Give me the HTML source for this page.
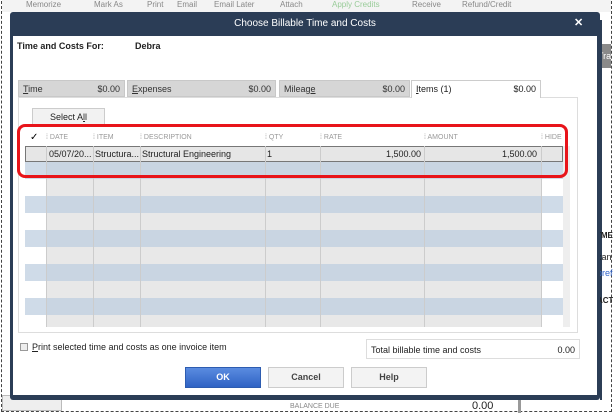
<!DOCTYPE html>
<html><head><style>
*{box-sizing:border-box;margin:0;padding:0}
body{width:613px;height:413px;overflow:hidden;background:#fff;font-family:"Liberation Sans",sans-serif;font-size:9px;color:#222;position:relative}
.a{position:absolute}
.frame{left:1px;top:1px;width:611px;height:411px;border:1px dashed #444}
</style></head><body>
<div class="a frame"></div>
<div class="a" style="left:2px;top:0;width:609px;height:12px;background:#f3f3f3;color:#888;font-size:8px;white-space:nowrap">
<span class="a" style="left:24px;top:0">Memorize</span><span class="a" style="left:92px;top:0">Mark As</span><span class="a" style="left:145px;top:0">Print</span><span class="a" style="left:175px;top:0">Email</span><span class="a" style="left:212px;top:0">Email Later</span><span class="a" style="left:278px;top:0">Attach</span><span class="a" style="left:330px;top:0;color:#9c9">Apply Credits</span><span class="a" style="left:410px;top:0">Receive</span><span class="a" style="left:460px;top:0">Refund/Credit</span></div>
<div class="a" style="left:598px;top:44px;width:13px;height:24px;background:#8a8a8a;color:#fff;font-size:9px;padding-top:7px">Tra</div>
<div class="a" style="left:600px;top:20px;width:2px;height:380px;background:#2c3e55"></div>
<div class="a" style="left:596px;top:231px;font-size:8px;font-weight:bold">TMEN</div>
<div class="a" style="left:597px;top:252px;font-size:9px">can</div>
<div class="a" style="left:597px;top:268px;font-size:9px;color:#36c">prefe</div>
<div class="a" style="left:597px;top:296px;font-size:8px;font-weight:bold">ACTI</div>
<div class="a" style="left:2px;top:395px;width:60px;height:16px;border:1px solid #bbb;background:#eee"></div>
<div class="a" style="left:290px;top:403px;font-size:7px;color:#888">BALANCE DUE</div>
<div class="a" style="left:472px;top:400px;font-size:11px">0.00</div>
<div class="a" style="left:518px;top:395px;width:3px;height:18px;background:#999"></div>
<div class="a" style="left:10px;top:12px;width:590px;height:388px;background:#2b3d56;border-radius:3px"></div>
<div class="a" style="left:10px;top:15px;width:590px;height:20px;color:#fff;font-size:10px;text-align:center;line-height:18px">Choose Billable Time and Costs</div>
<div class="a" style="left:574px;top:16px;color:#fff;font-size:11px;font-weight:bold">✕</div>
<div class="a" style="left:13px;top:36px;width:584px;height:359px;background:#fff"></div>
<div class="a" style="left:17px;top:41px;font-size:9px;font-weight:bold">Time and Costs For:</div>
<div class="a" style="left:135px;top:41px;font-size:9px;font-weight:bold">Debra</div>
<div class="a" style="left:18px;top:80px;width:107px;height:17px;background:#d6d6d6;border:1px solid #c8c8c8;padding:3px 4px;font-size:9px;color:#333"><u>T</u>ime<span style="float:right">$0.00</span></div>
<div class="a" style="left:127px;top:80px;width:149px;height:17px;background:#d6d6d6;border:1px solid #c8c8c8;padding:3px 4px;font-size:9px;color:#333"><u>E</u>xpenses<span style="float:right">$0.00</span></div>
<div class="a" style="left:279px;top:80px;width:131px;height:17px;background:#d6d6d6;border:1px solid #c8c8c8;padding:3px 4px;font-size:9px;color:#333">Mileag<u>e</u><span style="float:right">$0.00</span></div>
<div class="a" style="left:411px;top:80px;width:130px;height:18px;background:#fff;border:1px solid #ccc;border-bottom:none;padding:3px 4px;font-size:9px;color:#222;z-index:2"><u>I</u>tems (1)<span style="float:right">$0.00</span></div>
<div class="a" style="left:18px;top:97px;width:560px;height:236px;border:1px solid #ddd"></div>
<div class="a" style="left:32px;top:108px;width:73px;height:18px;background:#f2f2f2;border:1px solid #ccc;text-align:center;line-height:16px;font-size:9px">Select A<u>l</u>l</div>
<div class="a" style="left:25px;top:130px;width:545px;height:197px;background:#fff;overflow:hidden">
 <div class="a" style="left:0;top:0;width:545px;height:16px;font-size:7px;color:#999;white-space:nowrap">
  <span class="a" style="left:5px;top:2px;color:#000;font-size:10px">✓</span>
  <span class="a" style="left:21px;top:4px">⁞ DATE</span><span class="a" style="left:68px;top:4px">⁞ ITEM</span><span class="a" style="left:115px;top:4px">⁞ DESCRIPTION</span><span class="a" style="left:240px;top:4px">⁞ QTY</span><span class="a" style="left:295px;top:4px">⁞ RATE</span><span class="a" style="left:399px;top:4px">⁞ AMOUNT</span><span class="a" style="left:516px;top:4px">⁞ HIDE</span>
 </div>
 <div class="a" style="left:0;top:32px;width:538px;height:165px;background:repeating-linear-gradient(#cfdbe8 0 17px,#fff 17px 34px)"></div>
 <div class="a" style="left:21px;top:32px;width:495px;height:165px;background:repeating-linear-gradient(#c9d5e2 0 17px,#e8e8e8 17px 34px)"></div>
 <div class="a" style="left:0;top:16px;width:538px;height:16px;background:#e6e6e6;border:1px solid #777"></div>
 <div class="a" style="left:21px;top:16px;width:1px;height:181px;background:#ccc"></div>
 <div class="a" style="left:68px;top:16px;width:1px;height:181px;background:#ccc"></div>
 <div class="a" style="left:115px;top:16px;width:1px;height:181px;background:#ccc"></div>
 <div class="a" style="left:240px;top:16px;width:1px;height:181px;background:#ccc"></div>
 <div class="a" style="left:295px;top:16px;width:1px;height:181px;background:#ccc"></div>
 <div class="a" style="left:399px;top:16px;width:1px;height:181px;background:#ccc"></div>
 <div class="a" style="left:516px;top:16px;width:1px;height:181px;background:#ccc"></div>
 <div class="a" style="left:538px;top:16px;width:7px;height:181px;background:#eee"></div>
 <div class="a" style="left:0;top:19px;width:538px;font-size:9px;white-space:nowrap">
  <span class="a" style="left:24px">05/07/20...</span><span class="a" style="left:70px">Structura...</span><span class="a" style="left:117px">Structural Engineering</span><span class="a" style="left:242px">1</span><span class="a" style="left:300px;width:96px;text-align:right">1,500.00</span><span class="a" style="left:402px;width:110px;text-align:right">1,500.00</span>
 </div>
</div>
<div class="a" style="left:17px;top:124px;width:551px;height:54px;border:3px solid #e8141a;border-radius:8px"></div>
<div class="a" style="left:20px;top:343px;width:8px;height:8px;border:1px solid #999;background:#eee"></div>
<div class="a" style="left:32px;top:342px;font-size:9px"><u>P</u>rint selected time and costs as one invoice item</div>
<div class="a" style="left:366px;top:339px;width:214px;height:20px;border:1px solid #ddd;padding:5px 4px;font-size:9px">Total billable time and costs<span style="float:right">0.00</span></div>
<div class="a" style="left:185px;top:367px;width:76px;height:21px;background:linear-gradient(#5a8be0,#2f63c4);border:1px solid #2d5cb0;color:#fff;font-size:9px;font-weight:bold;text-align:center;line-height:19px">OK</div>
<div class="a" style="left:268px;top:367px;width:76px;height:21px;background:#f3f3f3;border:1px solid #ccc;font-size:9px;font-weight:bold;color:#444;text-align:center;line-height:19px">Cancel</div>
<div class="a" style="left:351px;top:367px;width:76px;height:21px;background:#f3f3f3;border:1px solid #ccc;font-size:9px;font-weight:bold;color:#444;text-align:center;line-height:19px">Help</div>
</body></html>
